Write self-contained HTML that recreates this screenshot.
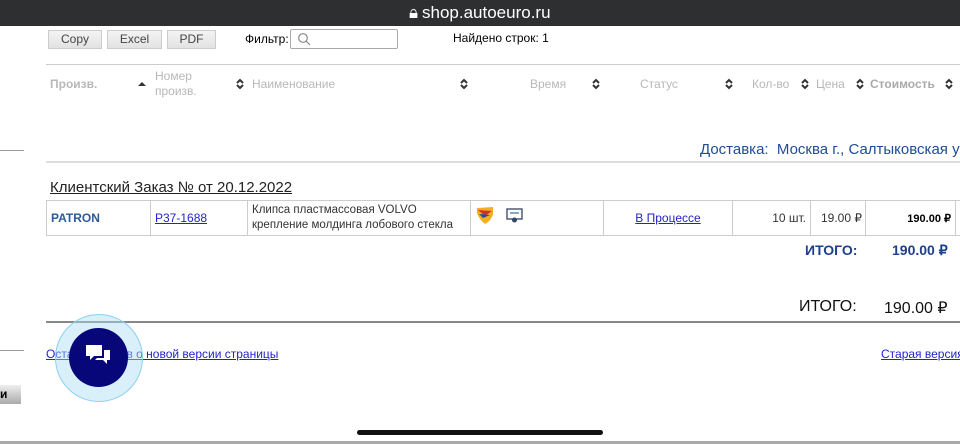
<!DOCTYPE html><html><head><meta charset="utf-8"><style>
body{margin:0;width:960px;height:444px;position:relative;overflow:hidden;background:#fff;font-family:"Liberation Sans",Arial,sans-serif}
.a{position:absolute;white-space:nowrap}
.btn{position:absolute;top:30px;height:17px;background:linear-gradient(#f4f4f4,#e2e2e2);border:1px solid #ccc;font-size:12px;color:#444;text-align:center;line-height:17px}
.h{font-size:12px;color:#b8b8b8;position:absolute;top:77px}
.s{position:absolute;top:78px}
.c{position:absolute;top:200px;height:34px;border:1px solid #ccc;border-right:none;box-sizing:content-box;font-size:12px;display:flex;align-items:center;white-space:nowrap;overflow:hidden}
a{color:#2323c8;text-decoration:underline}
</style></head><body>
<svg width="0" height="0" style="position:absolute"><defs><symbol id="ud" viewBox="0 0 8 12"><path d="M1 5L4 2L7 5M1 7L4 10L7 7" fill="none" stroke="#333" stroke-width="2"/></symbol></defs></svg>
<div class="a" style="left:0;top:0;width:960px;height:26px;background:#2e2f31"></div>
<div class="a" style="left:409px;top:3px;color:#fff;font-size:17px">🔒︎</div>
<div class="a" style="left:422px;top:3px;color:#fff;font-size:17px">shop.autoeuro.ru</div>
<div class="a" style="left:0;top:150px;width:24px;height:1px;background:#999"></div>
<div class="a" style="left:0;top:350px;width:24px;height:1px;background:#999"></div>
<div class="a" style="left:0;top:385px;width:21px;height:19px;background:linear-gradient(#eee,#aaa);font-size:12px;line-height:19px;font-weight:bold">и</div>
<div class="btn" style="left:48px;width:52px">Copy</div>
<div class="btn" style="left:107px;width:53px">Excel</div>
<div class="btn" style="left:167px;width:47px">PDF</div>
<div class="a" style="left:245px;top:32px;font-size:12px">Фильтр:</div>
<div class="a" style="left:290px;top:29px;width:106px;height:18px;border:1px solid #aaa;border-radius:2px"><svg width="14" height="14" style="position:absolute;left:6px;top:2px"><circle cx="6" cy="6" r="4.3" fill="none" stroke="#888" stroke-width="1.2"/><path d="M9 9l4 4" stroke="#888" stroke-width="1.2"/></svg></div>
<div class="a" style="left:453px;top:31px;font-size:12px">Найдено строк: 1</div>
<div class="a" style="left:46px;top:64px;width:914px;height:1px;background:#ccc"></div>
<div class="h" style="left:50px;font-weight:bold">Произв.</div>
<svg class="s" style="left:138px;top:81px" width="8" height="6"><path d="M0 5L4 1L8 5Z" fill="#333"/></svg>
<div class="h" style="left:155px;top:69px;line-height:15px">Номер<br>произв.</div>
<svg class="s" style="left:236px" width="8" height="12"><use href="#ud"/></svg><div class="h" style="left:252px">Наименование</div>
<svg class="s" style="left:460px" width="8" height="12"><use href="#ud"/></svg>
<div class="h" style="left:530px">Время</div><svg class="s" style="left:592px" width="8" height="12"><use href="#ud"/></svg>
<div class="h" style="left:640px">Статус</div><svg class="s" style="left:725px" width="8" height="12"><use href="#ud"/></svg>
<div class="h" style="left:752px">Кол-во</div><svg class="s" style="left:801px" width="8" height="12"><use href="#ud"/></svg>
<div class="h" style="left:816px">Цена</div><svg class="s" style="left:856px" width="8" height="12"><use href="#ud"/></svg>
<div class="h" style="left:870px;font-weight:bold;color:#aaa">Стоимость</div><svg class="s" style="left:945px" width="8" height="12"><use href="#ud"/></svg>
<div class="a" style="left:700px;top:141px;font-size:15px;color:#1e4c9a">Доставка:&nbsp; Москва г., Салтыковская у</div>
<div class="a" style="left:46px;top:161px;width:914px;height:2px;background:#ddd"></div>
<div class="a" style="left:50px;top:179px;font-size:15px;text-decoration:underline;color:#222">Клиентский Заказ № от 20.12.2022</div>
<div class="c" style="left:46px;width:103px;padding-left:4px;color:#2c5a9a;font-weight:bold">PATRON</div>
<div class="c" style="left:150px;width:96px;padding-left:4px"><a>P37-1688</a></div>
<div class="c" style="left:247px;width:222px;padding-left:4px;font-size:11.5px;line-height:15px;color:#333;white-space:normal">Клипса пластмассовая VOLVO<br>крепление молдинга лобового стекла</div>
<div class="c" style="left:470px;width:132px;align-items:flex-start"><svg width="60" height="22" style="margin-top:5px"><path d="M6 2 L22 1 L22 8 Q20 15 14 18 Q8 13 6 7Z" fill="#f0b020"/><path d="M7 4 L21 5 L14 10Z" fill="#c33"/><path d="M8 8 L19 9 L12 12Z" fill="#2a4aa0"/><rect x="36" y="3" width="15" height="10" fill="#fff" stroke="#346" stroke-width="1.3"/><rect x="39" y="6" width="9" height="2" fill="#8ab"/><circle cx="43.5" cy="14" r="2.5" fill="#346"/></svg></div>
<div class="c" style="left:603px;width:128px;justify-content:center"><a>В Процессе</a></div>
<div class="c" style="left:732px;width:73px;padding-right:4px;justify-content:flex-end;color:#333">10 шт.</div>
<div class="c" style="left:810px;width:51px;padding-right:4px;justify-content:flex-end;color:#333">19.00 ₽</div>
<div class="c" style="left:865px;width:85px;padding-right:4px;justify-content:flex-end;font-weight:bold;font-size:11px">190.00 ₽</div>
<div class="c" style="left:955px;width:10px"></div>
<div class="a" style="left:805px;top:242px;font-size:14px;font-weight:bold;color:#1e3f8a">ИТОГО:</div>
<div class="a" style="left:892px;top:242px;font-size:14px;font-weight:bold;color:#1e3f8a">190.00 ₽</div>
<div class="a" style="left:799px;top:298px;font-size:16px;color:#111">ИТОГО:</div>
<div class="a" style="left:884px;top:298px;font-size:16px;color:#111">190.00 ₽</div>
<div class="a" style="left:46px;top:321px;width:914px;height:2px;background:#888"></div>
<div class="a" style="left:46px;top:347px;font-size:12px"><a>Оставьте отзыв о новой версии страницы</a></div>
<div class="a" style="left:881px;top:347px;font-size:12px"><a>Старая версия</a></div>
<div class="a" style="left:55px;top:314px;width:86px;height:86px;border-radius:50%;background:rgba(170,220,245,.45);border:1px solid #8cd0ee"></div>
<div class="a" style="left:69px;top:328px;width:59px;height:59px;border-radius:50%;background:#07077a"></div>
<svg class="a" style="left:84px;top:343px" width="30" height="28"><path d="M2 2h16v11h-8l-4 4v-4H2z" fill="#fff"/><path d="M20 7h6v10h-3v4l-4-4h-8l2-2h7z" fill="#fff"/></svg>
<div class="a" style="left:0;top:441px;width:960px;height:3px;background:#aaa"></div>
<div class="a" style="left:357px;top:430px;width:246px;height:5px;border-radius:3px;background:#111"></div>
</body></html>
